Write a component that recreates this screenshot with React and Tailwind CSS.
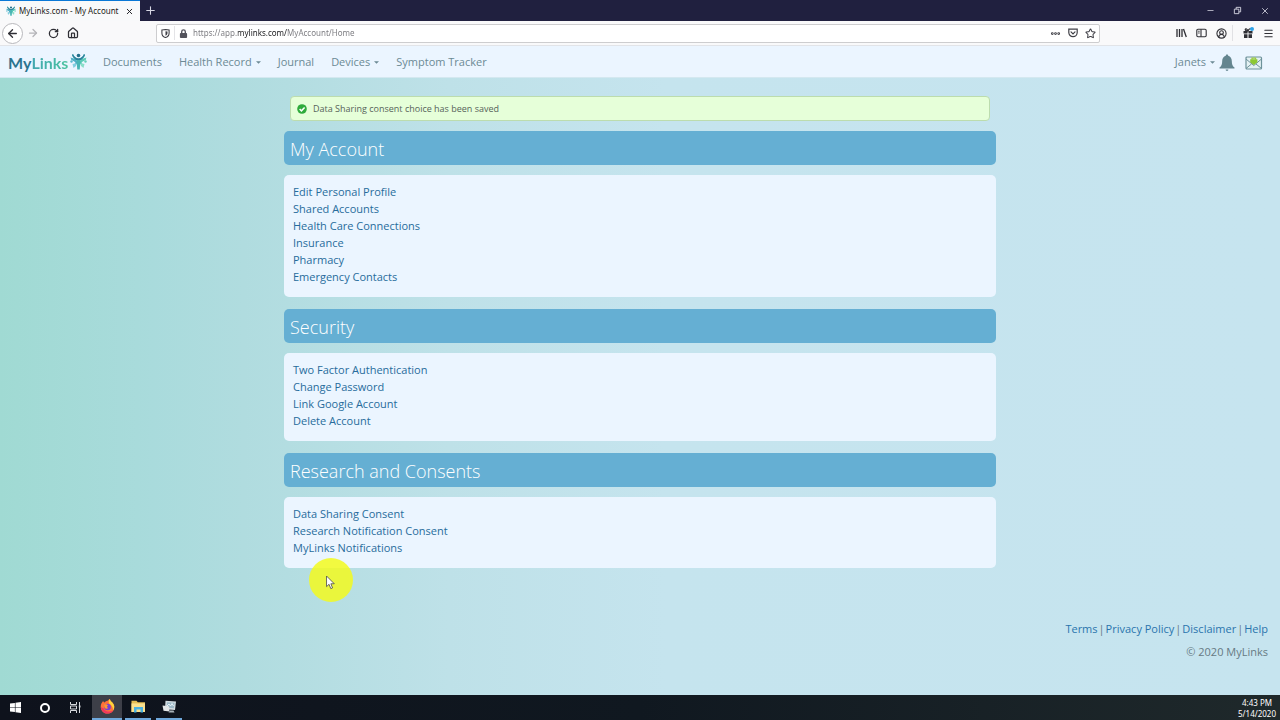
import React, { useState } from "react";
import {
    ArrowLeft,
    ArrowRight,
    CircleUserRound,
    Ellipsis,
    House,
    Menu,
    Minus,
    Plus,
    RotateCw,
    Star,
    X,
} from "lucide-react";

const NAV_ITEMS = [
    { label: "Documents" },
    { label: "Health Record", menu: true },
    { label: "Journal" },
    { label: "Devices", menu: true },
    { label: "Symptom Tracker" },
];

const SECTIONS = [
    {
        title: "My Account",
        links: [
            "Edit Personal Profile",
            "Shared Accounts",
            "Health Care Connections",
            "Insurance",
            "Pharmacy",
            "Emergency Contacts",
        ],
    },
    {
        title: "Security",
        links: [
            "Two Factor Authentication",
            "Change Password",
            "Link Google Account",
            "Delete Account",
        ],
    },
    {
        title: "Research and Consents",
        links: [
            "Data Sharing Consent",
            "Research Notification Consent",
            "MyLinks Notifications",
        ],
    },
];

const FOOTER_LINKS = ["Terms", "Privacy Policy", "Disclaimer", "Help"];

function LogoMark({ className }) {
    return (
        <svg viewBox="0 0 34 34" className={className} aria-hidden="true">
            <path d="M3 11C8 11 12 13 14 17V22L8 25L11 19C9 15 6 13 2 13Z" fill="#45a3bd" />
            <path d="M31 11C26 11 22 13 20 17V22L26 25L23 19C25 15 28 13 32 13Z" fill="#4cc3ae" />
            <path d="M1 9L13 13L14 20L3 14Z" fill="#4fb0c6" />
            <path d="M33 9L21 13L20 20L31 14Z" fill="#5cccb6" />
            <path d="M6 2C8 7 11 10 17 11C23 10 26 7 28 2L30 4C28 9 25 12 21 14L19.5 33H14.5L13 14C9 12 6 9 4 4Z" fill="#48b5b4" />
            <path d="M6 2C8 7 11 10 17 11C23 10 26 7 28 2L30 4C28 9 25 12 21 14H13C9 12 6 9 4 4Z" fill="#2d819c" />
            <path d="M13 20L5 22L7 30L12 26Z" fill="#83cfe0" />
            <path d="M21 20L29 22L27 30L22 26Z" fill="#8adfc9" />
            <circle cx="17" cy="5" r="3.6" fill="#236f8c" />
            <circle cx="3" cy="17" r="2.4" fill="#5ab9cf" />
            <circle cx="31" cy="17" r="2.4" fill="#62cfb8" />
        </svg>
    );
}

function Caret() {
    return (
        <svg viewBox="0 0 6 3" className="w-[5px] h-[3px]" aria-hidden="true">
            <path d="M0 0H6L3 3Z" fill="currentColor" />
        </svg>
    );
}

function TabBar() {
    return (
        <div className="flex h-[21px] bg-[#20203f] text-[#d8d8e4]">
            <div className="flex w-[140px] items-center border-t border-[#0a78d6] bg-[#f8f9fa] px-1.5 text-[#1c1c20]">
                <LogoMark className="size-[10px] shrink-0" />
                <span className="ml-[3px] flex-1 whitespace-nowrap font-['Noto_Sans',sans-serif] text-[8px]">
                    MyLinks.com - My Account
                </span>
                <button aria-label="Close tab">
                    <X className="size-[9px]" strokeWidth={2.5} />
                </button>
            </div>
            <button aria-label="New tab" className="ml-1">
                <Plus className="size-[13px]" strokeWidth={2} />
            </button>
            <div className="ml-auto flex items-center gap-[18px] pr-2.5">
                <button aria-label="Minimize">
                    <Minus className="size-[9px]" />
                </button>
                <button aria-label="Restore">
                    <svg viewBox="0 0 10 10" className="size-[9px]" fill="none" stroke="currentColor">
                        <path d="M1.5 3.5h5v5h-5zM3.5 3.5v-2h5v5h-2" />
                    </svg>
                </button>
                <button aria-label="Close window">
                    <X className="size-[10px]" />
                </button>
            </div>
        </div>
    );
}

function AddressBar() {
    const [url, setUrl] = useState("https://app.mylinks.com/MyAccount/Home");

    return (
        <div className="flex h-[19px] flex-1 items-center rounded-[2px] border border-[#cdcdcf] bg-white pl-1 pr-[3px] text-[#3f3f46]">
            <svg viewBox="0 0 10 10" className="size-[9px]" aria-hidden="true">
                <path d="M1 1.2L5 .6L9 1.2V4.5C9 7 7 9 5 9.5C3 9 1 7 1 4.5Z" fill="none" stroke="currentColor" strokeWidth="1.2" />
                <path d="M5 2.5L7.2 2.8V4.5C7.2 6 6.2 7 5 7.6Z" fill="currentColor" />
            </svg>
            <span className="ml-1 h-3.5 w-px bg-[#e4e4e7]" />
            <svg viewBox="0 0 10 10" className="ml-1 size-[9px]" aria-hidden="true">
                <rect x="1" y="4.5" width="8" height="5.5" rx="1" fill="#52525b" />
                <path d="M3 5V3a2 2 0 0 1 4 0v2" fill="none" stroke="#52525b" strokeWidth="1.5" />
            </svg>
            {/* host name is darker than the rest of the address */}
            <input
                aria-label="Address"
                value={url}
                onChange={(e) => setUrl(e.target.value)}
                className="ml-[5px] min-w-0 flex-1 bg-[linear-gradient(90deg,#77777c_45px,#18181b_45px,#18181b_94px,#77777c_94px)] bg-clip-text font-['Noto_Sans',sans-serif] text-[8px] text-transparent outline-none"
            />
            <div className="flex items-center gap-[7px]">
                <button aria-label="Page actions">
                    <Ellipsis className="size-[11px]" strokeWidth={4} />
                </button>
                <button aria-label="Save to Pocket">
                    <svg viewBox="0 0 10 10" className="size-[10px]" fill="none" stroke="currentColor" strokeWidth="1.2">
                        <path d="M.8 1.2H9.2V4.5A4.2 4.2 0 0 1 .8 4.5Z" />
                        <path d="M3 3.8L5 5.8L7 3.8" strokeLinecap="round" />
                    </svg>
                </button>
                <button aria-label="Bookmark this page">
                    <Star className="size-[11px]" strokeWidth={2.2} />
                </button>
            </div>
        </div>
    );
}

function Toolbar() {
    return (
        <div className="flex h-[25px] items-center border-b border-[#e2e4e8] bg-[#f9f9fa] text-[#2f2f35]">
            <div className="flex w-[156px] items-center">
                <button
                    aria-label="Back"
                    className="ml-0.5 flex size-[21px] items-center justify-center rounded-full border border-[#b8b8bc] bg-white"
                >
                    <ArrowLeft className="size-[13px]" strokeWidth={2.5} />
                </button>
                <button aria-label="Forward" className="ml-1 text-[#b4b4b8]">
                    <ArrowRight className="size-[12px]" strokeWidth={2.5} />
                </button>
                <button aria-label="Reload" className="ml-[9px]">
                    <RotateCw className="size-[11px]" strokeWidth={2.8} />
                </button>
                <button aria-label="Home" className="ml-2">
                    <House className="size-[12px]" strokeWidth={2.5} />
                </button>
            </div>
            <AddressBar />
            <div className="flex w-[180px] items-center justify-end gap-[9px] pr-1.5">
                <button aria-label="Library">
                    <svg viewBox="0 0 11 10" className="h-[10px] w-[11px]" stroke="currentColor" strokeWidth="1.3">
                        <path d="M1 1V9M3.5 1V9M6 1V9M7.5 1L10.3 9" />
                    </svg>
                </button>
                <button aria-label="Sidebars">
                    <svg viewBox="0 0 11 10" className="h-[10px] w-[11px]" fill="none" stroke="currentColor" strokeWidth="1.1">
                        <rect x=".8" y="1.3" width="9.4" height="7.4" rx="1.2" />
                        <path d="M5 1.3V8.7M2.2 3.3h1.4M2.2 5h1.4" />
                    </svg>
                </button>
                <button aria-label="Account">
                    <CircleUserRound className="size-[11px]" strokeWidth={2.4} />
                </button>
                <span className="-ml-1 h-4 w-px bg-[#e1e1e4]" />
                <button aria-label="What's new" className="relative">
                    <svg viewBox="0 0 12 12" className="size-[12px]" aria-hidden="true">
                        <path d="M1.5 4H5.5V6.5H1.5ZM6.5 4H10.5V6.5H6.5ZM2 7.3H5.5V11H2ZM6.5 7.3H10V11H6.5Z" fill="currentColor" />
                        <path d="M5.8 4C4 4 3 3.2 3.3 2.2C3.8 1.2 5.3 1.8 6 4C6.7 1.8 8.2 1.2 8.7 2.2" fill="none" stroke="currentColor" strokeWidth="1.2" />
                    </svg>
                    <span className="absolute right-0 top-0 size-1 rounded-full bg-[#2ea3e8]" />
                </button>
                <button aria-label="Open menu">
                    <Menu className="size-[11px]" strokeWidth={2.4} />
                </button>
            </div>
        </div>
    );
}

function SiteNav() {
    return (
        <header className="flex h-[32px] items-center border-b border-[#d4e8f0] bg-[#ebf5ff] pl-2 pr-[17px] pt-0.5 text-[11px] text-[#6c8a95]">
            <a href="#home" aria-label="MyLinks home" className="flex w-20 items-center font-['Lato',sans-serif] text-[16px] font-bold leading-5">
                <span className="text-[#2b748f]">My</span>
                <span className="bg-gradient-to-r from-[#43a6b0] to-[#4cc3a0] bg-clip-text text-transparent">
                    Links
                </span>
                <LogoMark className="mb-0.5 ml-0.5 size-[17px] shrink-0" />
            </a>
            <nav className="ml-[15px] flex items-center gap-[17px]">
                {NAV_ITEMS.map((item) => (
                    <a key={item.label} href="#nav" className="flex items-center gap-1 whitespace-nowrap">
                        {item.label}
                        {item.menu && <Caret />}
                    </a>
                ))}
            </nav>
            <div className="ml-auto flex items-center">
                <button className="flex items-center gap-1">
                    Janets
                    <Caret />
                </button>
                <button aria-label="Alerts" className="ml-1">
                    <svg viewBox="0 0 16 18" className="h-[18px] w-4" fill="#64858f">
                        <path d="M8 .5C8.8.5 9.2 1 9.2 1.8C11.6 2.5 12.8 4.5 12.8 7C12.8 10.5 13.6 12.3 15.5 13.6V14.5H.5V13.6C2.4 12.3 3.2 10.5 3.2 7C3.2 4.5 4.4 2.5 6.8 1.8C6.8 1 7.2.5 8 .5Z" />
                        <path d="M6.6 15.6H9.4A1.4 1.4 0 0 1 6.6 15.6Z" />
                    </svg>
                </button>
                <button aria-label="Secure messages" className="ml-2.5">
                    <svg viewBox="0 0 18 14" className="h-[14px] w-[18px]">
                        <rect x="1" y="1" width="15.5" height="12" rx="1" fill="#e4f1f3" stroke="#6d929b" strokeWidth="1.2" />
                        <path d="M1 12.5L6.5 8M16.5 12.5L11 8M1 3L8.8 9.5L16.5 3" fill="none" stroke="#6d929b" />
                        <path d="M7 3.5V2.2H10.6V3.5" fill="none" stroke="#9bcb3c" strokeWidth="1.2" />
                        <path d="M5.2 3.2H12.4V6.2L8.8 9L5.2 6.2Z" fill="#8cc832" />
                    </svg>
                </button>
            </div>
        </header>
    );
}

function SavedAlert() {
    return (
        <div
            role="status"
            className="mx-1.5 flex h-[25px] items-center gap-1.5 rounded-[4px] border border-[#bcdcae] bg-[#e6ffd9] px-1.5 text-[9px] text-[#56635a]"
        >
            <svg viewBox="0 0 10 10" className="size-[10px]" aria-hidden="true">
                <circle cx="5" cy="5" r="4.8" fill="#2fab3c" />
                <path d="M2.6 5L4.4 6.8L7.6 3.4" fill="none" stroke="#fff" strokeWidth="1.5" />
            </svg>
            Data Sharing consent choice has been saved
        </div>
    );
}

function Section({ title, links }) {
    return (
        <section className="mb-3">
            <h2 className="flex h-[34px] items-center rounded-[5px] bg-[#65afd3] px-1.5 pt-0.5 text-[18px] font-light text-white">
                {title}
            </h2>
            <ul className="mt-2.5 rounded-[5px] bg-[#ebf5ff] px-[9px] pb-3 pt-2 text-[11px] leading-[17px] text-[#276c9c]">
                {links.map((link) => (
                    <li key={link}>
                        <a href="#account" className="hover:underline">{link}</a>
                    </li>
                ))}
            </ul>
        </section>
    );
}

function Pointer() {
    return (
        <div className="pointer-events-none absolute bottom-[-12px] left-[25px] size-[44px] rounded-full bg-[#f3fa1f]/85">
            <svg viewBox="0 0 10 16" className="ml-[17px] mt-[17px] h-[15px] w-[9px]" aria-hidden="true">
                <path d="M.6.8V12.6L3.4 10L5.3 14.8L7.3 14L5.4 9.4H9.2Z" fill="#fff" stroke="#4a4a4a" strokeWidth=".9" />
            </svg>
        </div>
    );
}

function Footer() {
    return (
        <footer className="mt-[27px] pr-3 text-right text-[11px] leading-[23px] text-[#667a83]">
            <p>
                {FOOTER_LINKS.map((link, i) => (
                    <React.Fragment key={link}>
                        {i > 0 && <span className="mx-px">|</span>}
                        <a href="#info" className="text-[#2a74ad]">{link}</a>
                    </React.Fragment>
                ))}
            </p>
            <p>© 2020 MyLinks</p>
        </footer>
    );
}

function Taskbar() {
    return (
        <div className="flex h-[25px] bg-gradient-to-r from-[#0e121c] via-[#101820] to-[#1f292b] text-white">
            <button aria-label="Start" className="flex w-[30px] items-center justify-center">
                <svg viewBox="0 0 11 11" className="size-[11px]" fill="#fff">
                    <path d="M0 1.6L4.9.9V5.2H0ZM5.5.8L11 0V5.2H5.5ZM0 5.8H4.9V10.1L0 9.4ZM5.5 5.8H11V11L5.5 10.2Z" />
                </svg>
            </button>
            <button aria-label="Search" className="flex w-[30px] items-center justify-center">
                <span className="size-[10px] rounded-full border-2 border-white" />
            </button>
            <button aria-label="Task view" className="flex w-8 items-center justify-center">
                <svg viewBox="0 0 11 11" className="mr-0.5 size-[11px]" fill="none" stroke="#d8dade">
                    <path d="M.5 0V2.5H6.5V0M.5 11V8.5H6.5V11M.5 4H6.5V7H.5ZM9.5 0V11" />
                    <path d="M8.8 4.5H10.5" strokeWidth="2" />
                </svg>
            </button>
            <button aria-label="Firefox" className="flex w-[30px] items-center justify-center border-b-2 border-[#6fa8dc] bg-[#3d3f48]">
                <svg viewBox="0 0 16 16" className="size-[15px]">
                    <path d="M2 4C2.4 3 3 2.4 3.4 2C3.6 3 4.2 3.4 5 3.6C6 1.6 8 2.4 9 1C9.4.4 10.2 0 10.6 0C10.6 1.8 12 2.4 13.2 3.8C14.8 5.4 15.5 7 15.2 9.2C14.6 13 11.8 15.5 8 15.5C4 15.5.8 12.4.8 8.4C.8 6.6 1.2 5 2 4Z" fill="#ff7139" />
                    <path d="M10.6 0C10.6 1.8 12 2.4 13.2 3.8C15.6 6.4 15.8 9.6 14 12.2C14 8 12 6.4 10 5C8.8 3.6 9.2 1.4 10.6 0Z" fill="#ffd43b" />
                    <path d="M.8 8.4C1.4 13 5 15.5 8 15.5C11 15.5 13 14 14 12.2C11 14 6 14 4 10Z" fill="#f0365e" />
                    <circle cx="8" cy="8.6" r="3.5" fill="#7542d1" />
                    <path d="M4.4 6.2C6.2 5 8 6 8.6 7.2C7.2 7.2 7 9 8.8 9.6C7 11.6 4 10 4.4 6.2Z" fill="#ff9a2e" />
                </svg>
            </button>
            <button aria-label="File Explorer" className="ml-[3px] flex w-[26px] items-center justify-center border-b-2 border-[#6fa8dc]">
                <svg viewBox="0 0 15 13" className="h-[13px] w-[15px]">
                    <path d="M.5.8H5.5L6.8 2.2H14V12H.5Z" fill="#e5bd54" />
                    <path d="M.5 3.4H14V12H.5Z" fill="#fbe08d" />
                    <path d="M3 12.5V7H12V12.5H9.5V9.5H5.5V12.5Z" fill="#4bb1df" />
                </svg>
            </button>
            <button aria-label="Screen recorder" className="ml-[5px] flex w-[26px] items-center justify-center border-b-2 border-[#6fa8dc]">
                <svg viewBox="0 0 15 13" className="h-[13px] w-[15px]">
                    <path d="M3.5.8L14 1.6L13 10L3 9.2Z" fill="#d3dce1" />
                    <path d="M5 2.2L12.6 2.8L11.9 8.2L4.6 7.4Z" fill="#9db9c8" />
                    <path d="M5 6L7 4L8.5 6L10 3.5L11.5 6" fill="none" stroke="#e9f4fa" />
                    <path d="M.5 5.5L7 6.3L7.5 11.5L1.5 10.8Z" fill="#e3e6e8" />
                    <path d="M8 10.4H11.5L12.5 12.5H6.5Z" fill="#a9b2b8" />
                </svg>
            </button>
            <div className="ml-auto flex flex-col items-center justify-center pr-1 font-['Noto_Sans',sans-serif] text-[8px] leading-[11px]">
                <span>4:43 PM</span>
                <span>5/14/2020</span>
            </div>
        </div>
    );
}

function App() {
    return (
        <div className="flex min-h-screen flex-col font-['Open_Sans','Noto_Sans',sans-serif]">
            <TabBar />
            <Toolbar />
            <SiteNav />
            <div className="flex-1 bg-[linear-gradient(90deg,#a0dad3_0%,#a9dbdc_12%,#b0dcdf_19%,#bee1e8_35%,#c5e4ee_52%,#c6e4ef_100%)]">
                <main className="relative mx-auto w-full max-w-[712px] pt-[18px]">
                    <SavedAlert />
                    <div className="py-2.5">
                        {SECTIONS.map((section) => (
                            <Section key={section.title} {...section} />
                        ))}
                    </div>
                    <Pointer />
                </main>
                <Footer />
            </div>
            <Taskbar />
        </div>
    );
}

export default App;
